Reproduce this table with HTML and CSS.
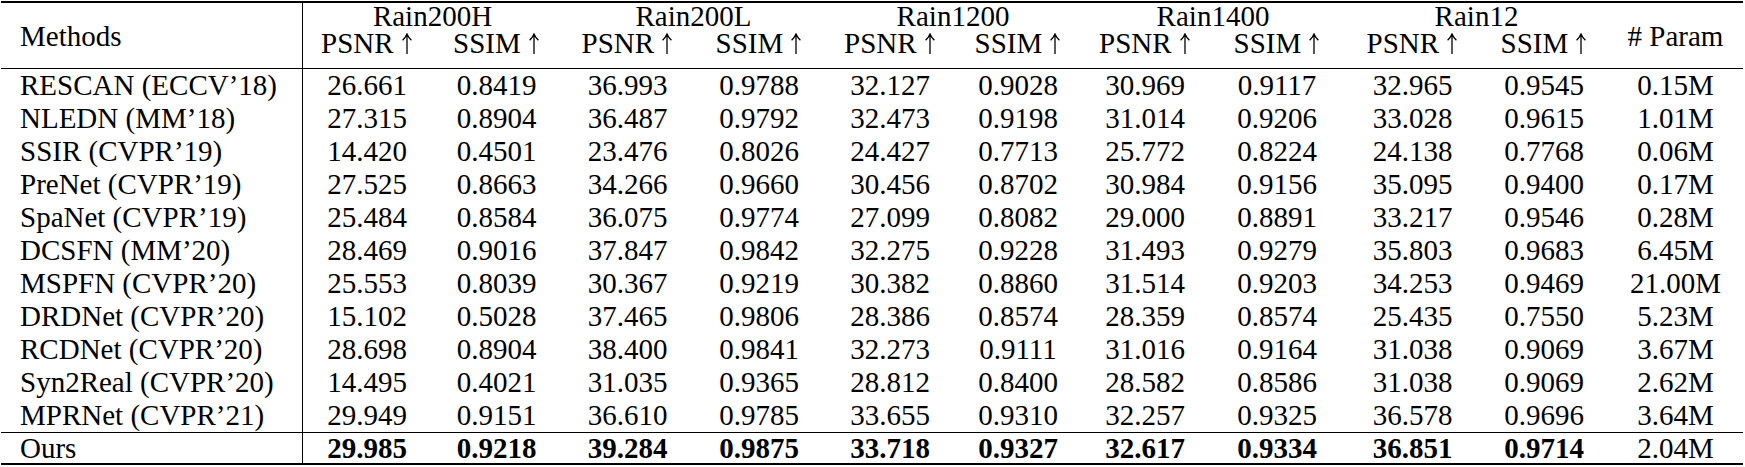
FILE: index.html
```html
<!DOCTYPE html>
<html>
<head>
<meta charset="utf-8">
<link rel="stylesheet" href="styles.css">
</head>
<body>
<table class="results">
  <colgroup>
    <col class="c-method">
    <col style="width:128px"><col style="width:131px">
    <col style="width:131px"><col style="width:132px">
    <col style="width:130px"><col style="width:126px">
    <col style="width:128px"><col style="width:136px">
    <col style="width:135px"><col style="width:128px">
    <col style="width:135px">
  </colgroup>
  <thead>
    <tr class="h1">
      <th rowspan="2" class="method sep">Methods</th>
      <th colspan="2">Rain200H</th>
      <th colspan="2">Rain200L</th>
      <th colspan="2">Rain1200</th>
      <th colspan="2">Rain1400</th>
      <th colspan="2">Rain12</th>
      <th rowspan="2">#&nbsp;Param</th>
    </tr>
    <tr class="h2">
      <th>PSNR&nbsp;<svg class="up" viewBox="0 0 12 21"><path d="M6 21V1.2M1.6 7.2Q4.6 4.4 6 1Q7.4 4.4 10.4 7.2"/></svg></th>
      <th>SSIM&nbsp;<svg class="up" viewBox="0 0 12 21"><path d="M6 21V1.2M1.6 7.2Q4.6 4.4 6 1Q7.4 4.4 10.4 7.2"/></svg></th>
      <th>PSNR&nbsp;<svg class="up" viewBox="0 0 12 21"><path d="M6 21V1.2M1.6 7.2Q4.6 4.4 6 1Q7.4 4.4 10.4 7.2"/></svg></th>
      <th>SSIM&nbsp;<svg class="up" viewBox="0 0 12 21"><path d="M6 21V1.2M1.6 7.2Q4.6 4.4 6 1Q7.4 4.4 10.4 7.2"/></svg></th>
      <th>PSNR&nbsp;<svg class="up" viewBox="0 0 12 21"><path d="M6 21V1.2M1.6 7.2Q4.6 4.4 6 1Q7.4 4.4 10.4 7.2"/></svg></th>
      <th>SSIM&nbsp;<svg class="up" viewBox="0 0 12 21"><path d="M6 21V1.2M1.6 7.2Q4.6 4.4 6 1Q7.4 4.4 10.4 7.2"/></svg></th>
      <th>PSNR&nbsp;<svg class="up" viewBox="0 0 12 21"><path d="M6 21V1.2M1.6 7.2Q4.6 4.4 6 1Q7.4 4.4 10.4 7.2"/></svg></th>
      <th>SSIM&nbsp;<svg class="up" viewBox="0 0 12 21"><path d="M6 21V1.2M1.6 7.2Q4.6 4.4 6 1Q7.4 4.4 10.4 7.2"/></svg></th>
      <th>PSNR&nbsp;<svg class="up" viewBox="0 0 12 21"><path d="M6 21V1.2M1.6 7.2Q4.6 4.4 6 1Q7.4 4.4 10.4 7.2"/></svg></th>
      <th>SSIM&nbsp;<svg class="up" viewBox="0 0 12 21"><path d="M6 21V1.2M1.6 7.2Q4.6 4.4 6 1Q7.4 4.4 10.4 7.2"/></svg></th>
    </tr>
  </thead>
  <tbody>
    <tr><td class="method sep">RESCAN (ECCV’18)</td><td>26.661</td><td>0.8419</td><td>36.993</td><td>0.9788</td><td>32.127</td><td>0.9028</td><td>30.969</td><td>0.9117</td><td>32.965</td><td>0.9545</td><td>0.15M</td></tr>
    <tr><td class="method sep">NLEDN (MM’18)</td><td>27.315</td><td>0.8904</td><td>36.487</td><td>0.9792</td><td>32.473</td><td>0.9198</td><td>31.014</td><td>0.9206</td><td>33.028</td><td>0.9615</td><td>1.01M</td></tr>
    <tr><td class="method sep">SSIR (CVPR’19)</td><td>14.420</td><td>0.4501</td><td>23.476</td><td>0.8026</td><td>24.427</td><td>0.7713</td><td>25.772</td><td>0.8224</td><td>24.138</td><td>0.7768</td><td>0.06M</td></tr>
    <tr><td class="method sep">PreNet (CVPR’19)</td><td>27.525</td><td>0.8663</td><td>34.266</td><td>0.9660</td><td>30.456</td><td>0.8702</td><td>30.984</td><td>0.9156</td><td>35.095</td><td>0.9400</td><td>0.17M</td></tr>
    <tr><td class="method sep">SpaNet (CVPR’19)</td><td>25.484</td><td>0.8584</td><td>36.075</td><td>0.9774</td><td>27.099</td><td>0.8082</td><td>29.000</td><td>0.8891</td><td>33.217</td><td>0.9546</td><td>0.28M</td></tr>
    <tr><td class="method sep">DCSFN (MM’20)</td><td>28.469</td><td>0.9016</td><td>37.847</td><td>0.9842</td><td>32.275</td><td>0.9228</td><td>31.493</td><td>0.9279</td><td>35.803</td><td>0.9683</td><td>6.45M</td></tr>
    <tr><td class="method sep">MSPFN (CVPR’20)</td><td>25.553</td><td>0.8039</td><td>30.367</td><td>0.9219</td><td>30.382</td><td>0.8860</td><td>31.514</td><td>0.9203</td><td>34.253</td><td>0.9469</td><td>21.00M</td></tr>
    <tr><td class="method sep">DRDNet (CVPR’20)</td><td>15.102</td><td>0.5028</td><td>37.465</td><td>0.9806</td><td>28.386</td><td>0.8574</td><td>28.359</td><td>0.8574</td><td>25.435</td><td>0.7550</td><td>5.23M</td></tr>
    <tr><td class="method sep">RCDNet (CVPR’20)</td><td>28.698</td><td>0.8904</td><td>38.400</td><td>0.9841</td><td>32.273</td><td>0.9111</td><td>31.016</td><td>0.9164</td><td>31.038</td><td>0.9069</td><td>3.67M</td></tr>
    <tr><td class="method sep">Syn2Real (CVPR’20)</td><td>14.495</td><td>0.4021</td><td>31.035</td><td>0.9365</td><td>28.812</td><td>0.8400</td><td>28.582</td><td>0.8586</td><td>31.038</td><td>0.9069</td><td>2.62M</td></tr>
    <tr><td class="method sep">MPRNet (CVPR’21)</td><td>29.949</td><td>0.9151</td><td>36.610</td><td>0.9785</td><td>33.655</td><td>0.9310</td><td>32.257</td><td>0.9325</td><td>36.578</td><td>0.9696</td><td>3.64M</td></tr>
  </tbody>
  <tfoot>
    <tr class="ours"><td class="method sep">Ours</td><td class="b">29.985</td><td class="b">0.9218</td><td class="b">39.284</td><td class="b">0.9875</td><td class="b">33.718</td><td class="b">0.9327</td><td class="b">32.617</td><td class="b">0.9334</td><td class="b">36.851</td><td class="b">0.9714</td><td>2.04M</td></tr>
  </tfoot>
</table>
</body>
</html>
```
FILE: styles.css
```css
html, body {
  margin: 0;
  padding: 0;
  background: #fff;
}
body {
  padding: 1px 0 0 1px;
}
.results {
  font-family: "Liberation Serif", "Times New Roman", serif;
  font-size: 29px;
  color: #000;
  border-collapse: separate;
  border-spacing: 0;
  table-layout: fixed;
  width: 1742px;
  border-top: 2px solid #000;
  border-bottom: 2px solid #000;
}
.c-method { width: 302px; }
.results th, .results td {
  padding: 0;
  text-align: center;
  font-weight: normal;
  white-space: nowrap;
}
.results .method {
  text-align: left;
  padding-left: 19px;
}
.results .sep {
  border-right: 1px solid #000;
}
.h1 th { line-height: 27px; }
.h2 th { line-height: 27px; padding-bottom: 11px; }
.results th[rowspan] { vertical-align: middle; padding-top: 2px; padding-bottom: 0; }
.h2 th { border-bottom: 1px solid #000; }
.results th[rowspan] { border-bottom: 1px solid #000; }
.up {
  width: 12px;
  height: 21px;
  vertical-align: -1px;
  fill: none;
  stroke: #000;
  stroke-width: 1.3;
}
tbody td { line-height: 33px; }
tfoot td {
  line-height: 30px;
  border-top: 1px solid #000;
}
.results .b { font-weight: bold; }
```
